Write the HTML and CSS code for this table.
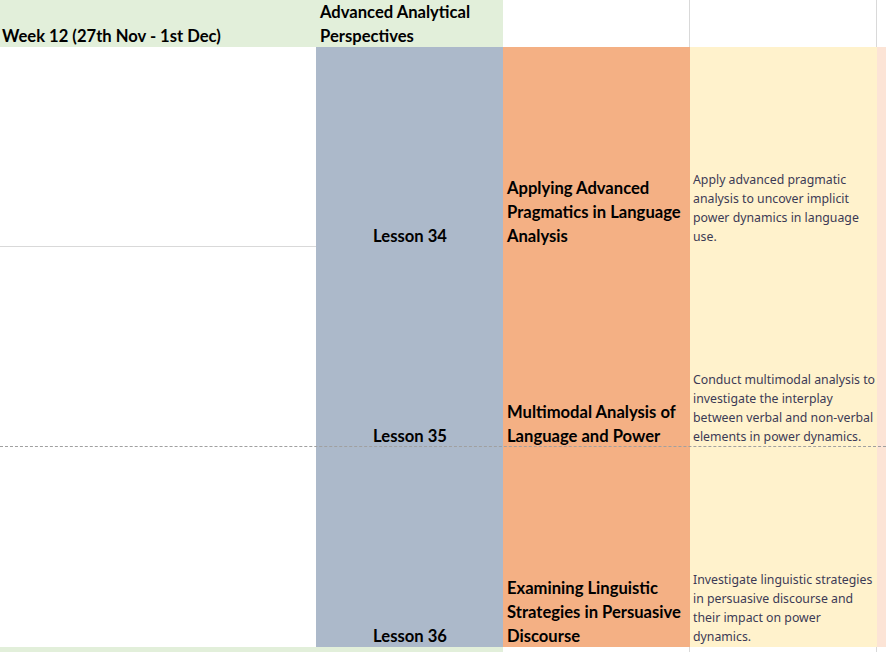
FILE: index.html
```html
<!DOCTYPE html>
<html>
<head>
<meta charset="utf-8">
<link rel="stylesheet" href="styles.css">
</head>
<body>
<div class="sheet">
  <div class="cell head green"><span class="b">Week 12 (27th Nov - 1st Dec)</span></div>
  <div class="cell head green pad4"><span class="b">Advanced Analytical Perspectives</span></div>
  <div class="cell head grid-r"></div>
  <div class="cell head grid-r"></div>
  <div class="cell head"></div>

  <div class="cell white line-b"></div>
  <div class="cell blue center"><span class="b">Lesson 34</span></div>
  <div class="cell orange pad4"><span class="b">Applying Advanced Pragmatics in Language Analysis</span></div>
  <div class="cell yellow desc">Apply advanced pragmatic analysis to uncover implicit power dynamics in language use.</div>
  <div class="cell pink"></div>

  <div class="cell white"></div>
  <div class="cell blue center"><span class="b">Lesson 35</span></div>
  <div class="cell orange pad4"><span class="b">Multimodal Analysis of Language and Power</span></div>
  <div class="cell yellow desc">Conduct multimodal analysis to investigate the interplay between verbal and non-verbal elements in power dynamics.</div>
  <div class="cell pink"></div>

  <div class="cell white"></div>
  <div class="cell blue center"><span class="b">Lesson 36</span></div>
  <div class="cell orange pad4"><span class="b">Examining Linguistic Strategies in Persuasive Discourse</span></div>
  <div class="cell yellow desc">Investigate linguistic strategies in persuasive discourse and their impact on power dynamics.</div>
  <div class="cell pink"></div>

  <div class="cell green"></div>
  <div class="cell green"></div>
  <div class="cell grid-r"></div>
  <div class="cell grid-r"></div>
  <div class="cell"></div>

  <div class="pagebreak"></div>
</div>
</body>
</html>
```

FILE: styles.css
```css
html, body {
  margin: 0;
  padding: 0;
  background: #ffffff;
  overflow: hidden;
}
.sheet {
  position: relative;
  display: grid;
  grid-template-columns: 316px 187px 187px 187px 9px;
  grid-template-rows: 47px 200px 200px 200px 5px;
  width: 886px;
  height: 652px;
  font-family: Lato, "Open Sans", sans-serif;
  color: #000;
}
.cell {
  box-sizing: border-box;
  display: flex;
  align-items: flex-end;
  padding: 0 1px 0 2px;
  overflow: hidden;
}
.head { padding-bottom: 0; }
.b {
  font-weight: 700;
  font-size: 16.6px;
  line-height: 24px;
  position: relative;
  top: 1px;
}
.head .b { top: 1px; }
.pad4 { padding-left: 4px; }
.center { justify-content: center; }
.green { background: #e2efda; }
.blue { background: #acb9ca; }
.orange { background: #f4b084; }
.yellow { background: #fff2cc; }
.pink { background: #fce4d6; }
.white { background: #ffffff; }
.grid-r { border-right: 1px solid #d9d9d9; }
.line-b { border-bottom: 1px solid #d9d9d9; }
.desc {
  padding-left: 3px;
  padding-right: 0;
  padding-bottom: 1px;
  font-family: "Noto Sans", "Open Sans", sans-serif;
  font-size: 12.3px;
  line-height: 19px;
  color: #3c3a55;
}
.pagebreak {
  position: absolute;
  left: 0;
  right: 0;
  top: 446px;
  height: 0;
  border-top: 1px dashed #a0a0a0;
}
```
